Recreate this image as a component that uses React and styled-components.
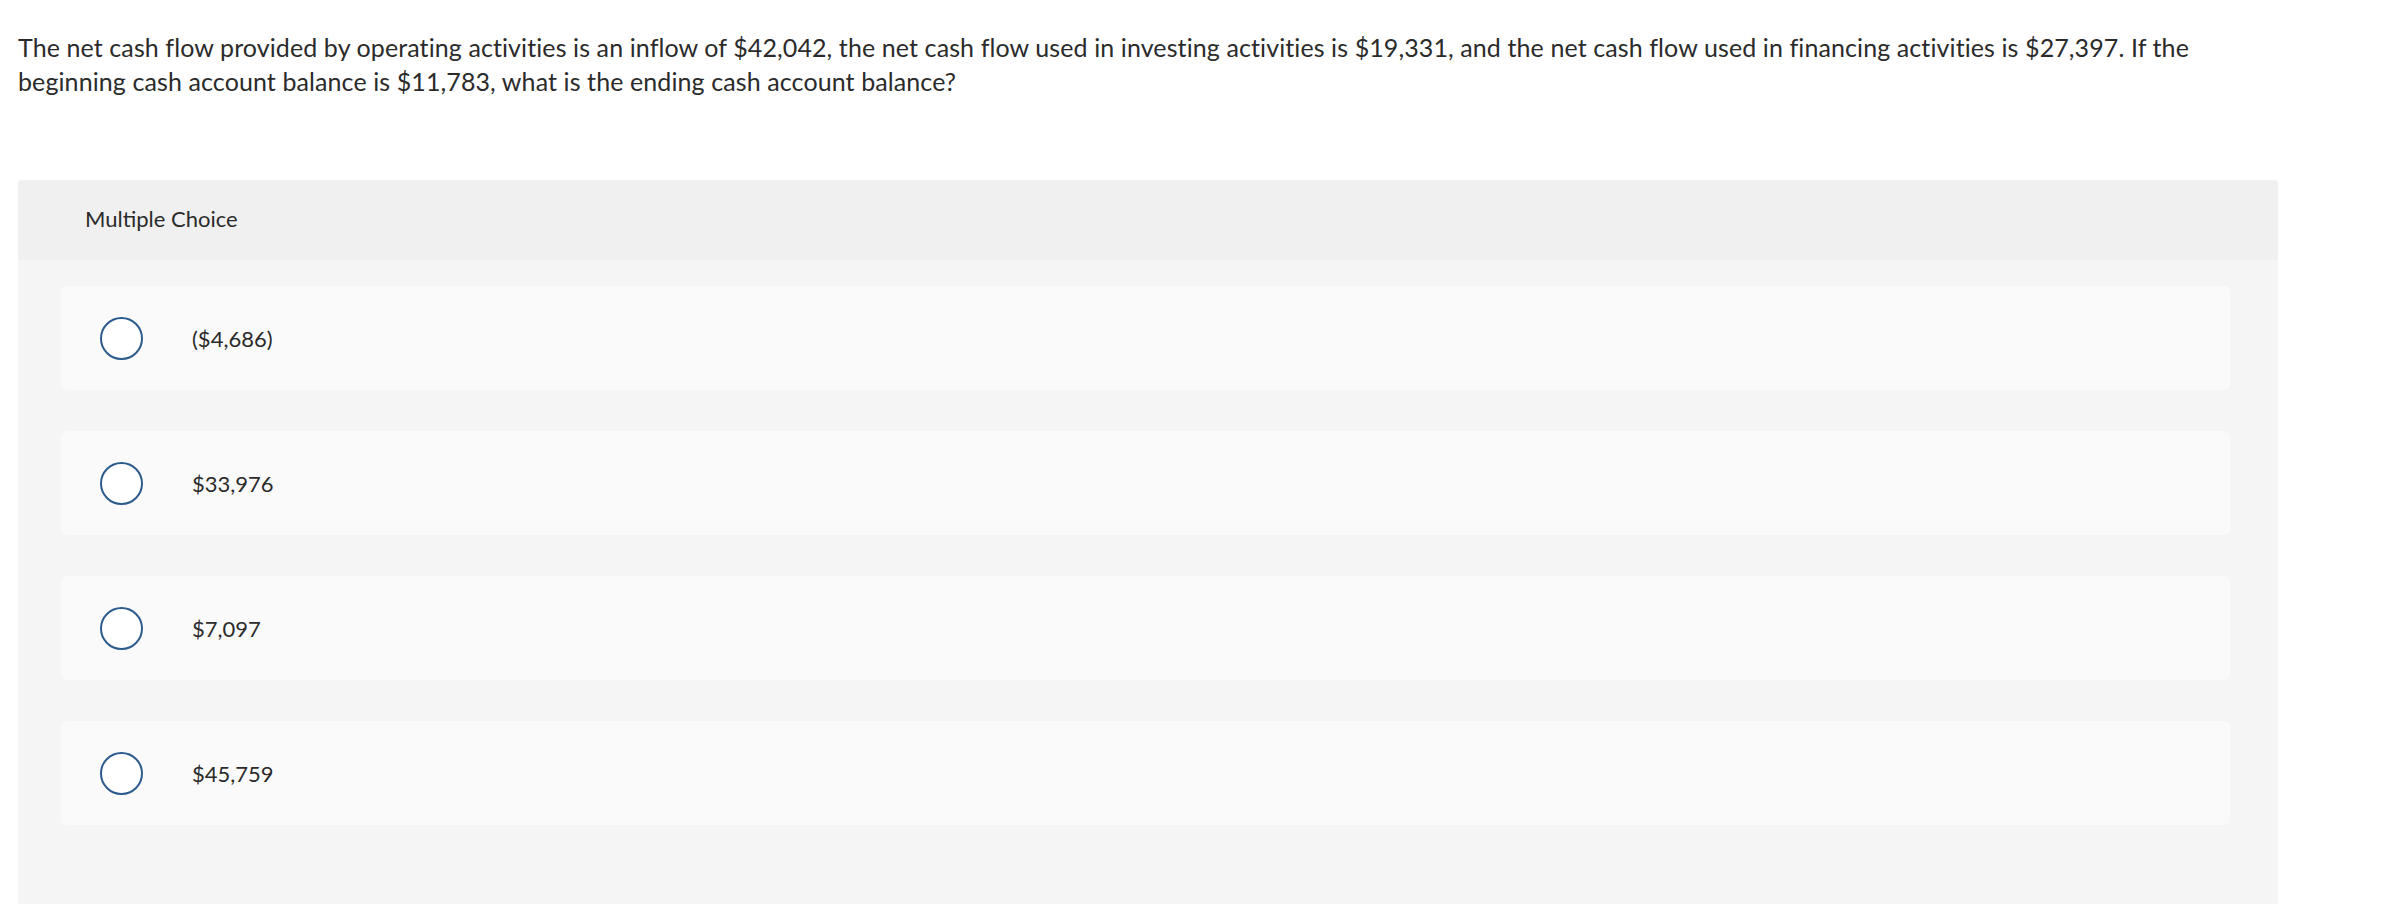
import React from 'react'
import styled, { createGlobalStyle } from 'styled-components'

const GlobalStyle = createGlobalStyle`
  html, body {
    margin: 0;
    padding: 0;
    background: #ffffff;
  }
  body {
    font-family: Lato, "Open Sans", sans-serif;
    color: #2b2b2b;
  }
`

const Page = styled.div`
  padding: 30px 18px 0 18px;
  width: 2260px;
`

const Question = styled.p`
  margin: 0;
  font-size: 25px;
  letter-spacing: 0.1px;
  line-height: 34px;
  max-width: 2210px;
`

const Panel = styled.section`
  margin-top: 82px;
  background-color: #f5f5f5;
  border-radius: 4px 4px 0 0;
  overflow: hidden;
`

const PanelHeader = styled.div`
  height: 80px;
  display: flex;
  align-items: center;
  padding-left: 67px;
  padding-bottom: 3px;
  box-sizing: border-box;
  background-color: #f0f0f0;
  font-size: 22px;
`

const ChoiceList = styled.div`
  display: flex;
  flex-direction: column;
  gap: 41px;
  padding: 26px 48px 90px 43px;
`

const Choice = styled.label`
  height: 104px;
  display: flex;
  align-items: center;
  padding-left: 39px;
  background-color: #fafafa;
  border-radius: 6px;
  cursor: pointer;
`

const Radio = styled.span`
  width: 39px;
  height: 39px;
  flex-shrink: 0;
  border: 2px solid #2c5b8e;
  border-radius: 50%;
  background-color: #ffffff;
`

const ChoiceText = styled.span`
  margin-left: 49px;
  font-size: 22px;
`

const choices = ['($4,686)', '$33,976', '$7,097', '$45,759']

const App = () => (
  <Page>
    <GlobalStyle />
    <Question>
      The net cash flow provided by operating activities is an inflow of $42,042, the net cash flow used in investing
      activities is $19,331, and the net cash flow used in financing activities is $27,397. If the beginning cash account
      balance is $11,783, what is the ending cash account balance?
    </Question>
    <Panel>
      <PanelHeader>Multiple Choice</PanelHeader>
      <ChoiceList>
        {choices.map((choice) => (
          <Choice key={choice}>
            <Radio />
            <ChoiceText>{choice}</ChoiceText>
          </Choice>
        ))}
      </ChoiceList>
    </Panel>
  </Page>
)

export default App
